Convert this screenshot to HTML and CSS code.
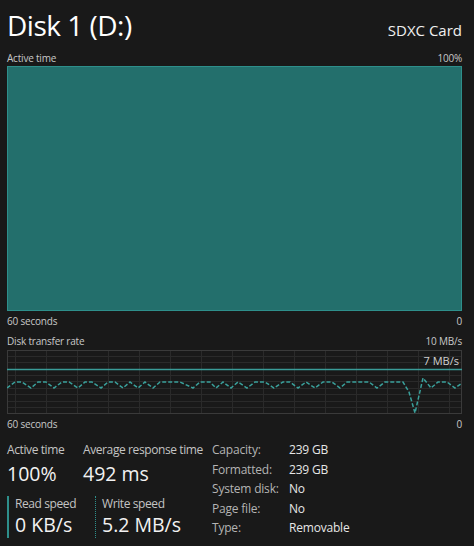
FILE: index.html
```html
<!DOCTYPE html>
<html lang="en">
<head>
    <meta charset="UTF-8">
    <title>Disk 1 (D:)</title>
    <link rel="stylesheet" href="styles.css">
</head>
<body>
    <div class="panel">
        <div class="header">
            <h1 class="title">Disk 1 (D:)</h1>
            <span class="model">SDXC Card</span>
        </div>

        <div class="axis top-axis">
            <span>Active time</span>
            <span>100%</span>
        </div>
        <div class="active-graph"></div>
        <div class="axis">
            <span>60 seconds</span>
            <span>0</span>
        </div>

        <div class="axis top-axis second">
            <span>Disk transfer rate</span>
            <span>10 MB/s</span>
        </div>
        <div class="rate-graph">
            <svg width="455" height="64" viewBox="0 0 455 64">
                <g class="grid">
                    <line x1="0" y1="6.5" x2="455" y2="6.5"/>
                    <line x1="0" y1="12.5" x2="455" y2="12.5"/>
                    <line x1="0" y1="25.5" x2="455" y2="25.5"/>
                    <line x1="0" y1="31.5" x2="455" y2="31.5"/>
                    <line x1="0" y1="38.5" x2="455" y2="38.5"/>
                    <line x1="0" y1="44.5" x2="455" y2="44.5"/>
                    <line x1="0" y1="51.5" x2="455" y2="51.5"/>
                    <line x1="0" y1="57.5" x2="455" y2="57.5"/>
                    <line x1="8.5" y1="0" x2="8.5" y2="64"/>
                    <line x1="39.5" y1="0" x2="39.5" y2="64"/>
                    <line x1="70.5" y1="0" x2="70.5" y2="64"/>
                    <line x1="101.5" y1="0" x2="101.5" y2="64"/>
                    <line x1="132.5" y1="0" x2="132.5" y2="64"/>
                    <line x1="163.5" y1="0" x2="163.5" y2="64"/>
                    <line x1="194.5" y1="0" x2="194.5" y2="64"/>
                    <line x1="225.5" y1="0" x2="225.5" y2="64"/>
                    <line x1="256.5" y1="0" x2="256.5" y2="64"/>
                    <line x1="287.5" y1="0" x2="287.5" y2="64"/>
                    <line x1="318.5" y1="0" x2="318.5" y2="64"/>
                    <line x1="349.5" y1="0" x2="349.5" y2="64"/>
                    <line x1="380.5" y1="0" x2="380.5" y2="64"/>
                    <line x1="411.5" y1="0" x2="411.5" y2="64"/>
                    <line x1="442.5" y1="0" x2="442.5" y2="64"/>
                </g>
                <rect class="frame" x="0.5" y="0.5" width="454" height="63"/>
                <line class="max-line" x1="0" y1="19.5" x2="455" y2="19.5"/>
                <text class="max-label" x="452" y="15">7 MB/s</text>
                <polyline class="write-line" points="0,38 8,32 15,32 24,38 31,32 39,32 47,38 55,32 62,32 71,38 78,32 85,32 94,38 101,32 108,32 116,38 123,32 131,38 138,32 146,38 153,32 163,32 173,32 186,38 193,32 203,32 209,38 216,32 224,38 231,32 240,38 248,32 258,32 267,38 276,32 283,32 291,38 299,32 308,38 316,32 325,32 333,38 340,32 350,32 362,32 370,38 378,32 390,32 396,32 402,42 408,63 416,28 424,38 431,32 440,32 448,38 455,33"/>
            </svg>
        </div>
        <div class="axis">
            <span>60 seconds</span>
            <span>0</span>
        </div>

        <div class="stats">
            <div class="stats-main">
                <div class="stat-row">
                    <div class="stat first">
                        <div class="stat-label">Active time</div>
                        <div class="stat-value">100%</div>
                    </div>
                    <div class="stat">
                        <div class="stat-label">Average response time</div>
                        <div class="stat-value">492 ms</div>
                    </div>
                </div>
                <div class="stat-row">
                    <div class="stat speed read">
                        <div class="stat-label">Read speed</div>
                        <div class="stat-value">0 KB/s</div>
                    </div>
                    <div class="stat speed write">
                        <div class="stat-label">Write speed</div>
                        <div class="stat-value">5.2 MB/s</div>
                    </div>
                </div>
            </div>
            <div class="props">
                <span class="prop-name">Capacity:</span><span class="prop-value">239 GB</span>
                <span class="prop-name">Formatted:</span><span class="prop-value">239 GB</span>
                <span class="prop-name">System disk:</span><span class="prop-value">No</span>
                <span class="prop-name">Page file:</span><span class="prop-value">No</span>
                <span class="prop-name">Type:</span><span class="prop-value">Removable</span>
            </div>
        </div>
    </div>
</body>
</html>
```

FILE: styles.css
```css
body {
    margin: 0;
    background-color: #191919;
    color: #e6e6e6;
    font-family: 'Open Sans', sans-serif;
}
.panel {
    padding: 0 12px 0 7px;
}
.header {
    display: flex;
    justify-content: space-between;
    align-items: baseline;
    height: 50px;
}
.title {
    margin: 0;
    font-size: 28px;
    font-weight: 400;
    line-height: 50px;
    color: #fff;
    letter-spacing: -0.5px;
}
.model {
    font-size: 15px;
    color: #f0f0f0;
}
.axis {
    display: flex;
    justify-content: space-between;
    font-size: 10px;
    letter-spacing: -0.2px;
    line-height: 20px;
    color: #c8c8c8;
}
.top-axis {
    line-height: 16px;
}
.second {
    margin-top: 2px;
}
.active-graph {
    height: 243px;
    background-color: #236f6c;
    border: 1px solid #2e8f8b;
}
.rate-graph {
    height: 64px;
    margin-top: 1px;
}
.rate-graph svg {
    display: block;
}
.grid line {
    stroke: #2a2a2a;
    stroke-width: 1;
}
.frame {
    fill: none;
    stroke: #3a3a3a;
}
.max-line {
    stroke: #3a9c98;
    stroke-width: 1.5;
}
.max-label {
    fill: #d0d0d0;
    font-size: 11px;
    text-anchor: end;
}
.write-line {
    fill: none;
    stroke: #3aa09b;
    stroke-width: 1.5;
    stroke-dasharray: 4 2;
}
.stats {
    display: flex;
    margin-top: 7px;
}
.stats-main {
    width: 205px;
}
.stat-row {
    display: flex;
}
.stat-row + .stat-row {
    margin-top: 7px;
}
.stat.first {
    width: 76px;
}
.stat-label {
    font-size: 12px;
    letter-spacing: -0.4px;
    line-height: 18px;
    color: #c4c4c4;
}
.stat-value {
    font-size: 19.5px;
    line-height: 30px;
    color: #f2f2f2;
}
.speed {
    padding-left: 6px;
}
.speed .stat-label {
    line-height: 15px;
}
.speed .stat-value {
    line-height: 27px;
}
.read {
    width: 80px;
    border-left: 2px solid #2e8f8b;
}
.write {
    border-left: 1px dotted #2e8f8b;
}
.props {
    display: grid;
    grid-template-columns: 77px auto;
    font-size: 12px;
    letter-spacing: -0.2px;
    line-height: 19.5px;
    margin-top: -1px;
}
.prop-name {
    color: #b4b4b4;
}
.prop-value {
    color: #e6e6e6;
}
```
